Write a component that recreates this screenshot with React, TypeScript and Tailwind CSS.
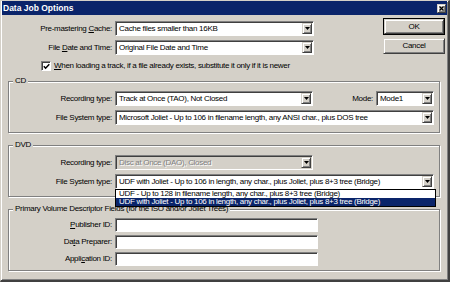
import React from "react";

const sunken =
  "border border-t-[#808080] border-l-[#808080] border-r-white border-b-white shadow-[inset_1px_1px_0_#404040]";
const raised =
  "border border-t-[#d4d0c8] border-l-[#d4d0c8] border-r-[#404040] border-b-[#404040] shadow-[inset_1px_1px_0_#fff,inset_-1px_-1px_0_#808080]";

function Arrow() {
  return (
    <div className={`w-[10px] h-full shrink-0 bg-[#d4d0c8] flex items-center justify-center ${raised}`}>
      <svg width="5" height="3" viewBox="0 0 5 3">
        <path d="M0 0 H5 L2.5 3 Z" fill="#000" />
      </svg>
    </div>
  );
}

function Combo({
  text,
  className = "",
  disabled = false,
}: {
  text: string;
  className?: string;
  disabled?: boolean;
}) {
  return (
    <div
      className={`flex h-[15px] p-[1px] ${sunken} ${disabled ? "bg-[#d4d0c8]" : "bg-white"} ${className}`}
    >
      <div
        className={`flex-1 overflow-hidden whitespace-nowrap pl-[2px] leading-[11px] ${
          disabled ? "text-[#808080] [text-shadow:1px_1px_0_#fff]" : "text-black"
        }`}
      >
        {text}
      </div>
      <Arrow />
    </div>
  );
}

function Label({ children, w = "w-[103px]" }: { children: React.ReactNode; w?: string }) {
  return <div className={`${w} shrink-0 text-right whitespace-nowrap`}>{children}</div>;
}

function Group({ title, children, className = "" }: { title: string; children: React.ReactNode; className?: string }) {
  return (
    <fieldset
      className={`ml-[6px] w-[432px] border border-[#808080] shadow-[inset_1px_1px_0_#fff,1px_1px_0_#fff] ${className}`}
    >
      <legend className="ml-[4px] px-[2px] h-[10px] leading-[10px] whitespace-nowrap bg-[#d4d0c8]">{title}</legend>
      {children}
    </fieldset>
  );
}

export default function App() {
  return (
    <div className="w-[450px] h-[282px] overflow-hidden bg-[#d4d0c8] border border-t-[#d4d0c8] border-l-[#d4d0c8] border-r-2 border-b-2 border-r-[#404040] border-b-[#404040] shadow-[inset_1px_1px_0_#fff,inset_-1px_-1px_0_#808080] px-[1px] pb-[1px] flex flex-col text-[8px] tracking-[-0.3px] text-black font-['Liberation_Sans',Arial,sans-serif]">
      {/* Title bar */}
      <div className="h-[14px] shrink-0 bg-[#0a246a] flex items-center pl-[1px] pr-[1px]">
        <span className="text-white font-bold text-[8.5px] tracking-normal leading-[14px]">Data Job Options</span>
        <div className={`ml-auto w-[9px] h-[9px] bg-[#d4d0c8] flex items-center justify-center ${raised}`}>
          <svg width="5" height="5" viewBox="0 0 5 5">
            <path d="M0.5 0.5 L4.5 4.5 M4.5 0.5 L0.5 4.5" stroke="#000" strokeWidth="1.2" />
          </svg>
        </div>
      </div>

      {/* Top section */}
      <div className="flex pt-[3px]">
        <div className="flex flex-col pt-[3px]">
          <div className="flex items-center h-[15px]">
            <Label w="w-[110px]">
              Pre-mastering <u>C</u>ache:
            </Label>
            <Combo className="ml-[3px] w-[199px]" text="Cache files smaller than 16KB" />
          </div>
          <div className="flex items-center h-[15px] mt-[4px]">
            <Label w="w-[110px]">
              File <u>D</u>ate and Time:
            </Label>
            <Combo className="ml-[3px] w-[199px]" text="Original File Date and Time" />
          </div>
          <div className="flex items-center h-[10px] mt-[6px] pl-[39px]">
            <div className={`w-[10px] h-[10px] bg-white flex items-center justify-center ${sunken}`}>
              <svg width="7" height="7" viewBox="0 0 7 7">
                <path d="M0.8 3.2 L2.6 5.2 L6.3 1.2" stroke="#000" strokeWidth="1.5" fill="none" />
              </svg>
            </div>
            <span className="ml-[3px] whitespace-nowrap">
              <u>W</u>hen loading a track, if a file already exists, substitute it only if it is newer
            </span>
          </div>
        </div>
        <div className="ml-auto mr-[2px] flex flex-col">
          <div className="w-[62px] h-[17px] border border-black">
            <div className={`w-full h-full flex items-center justify-center ${raised}`}>OK</div>
          </div>
          <div className={`mt-[3px] w-[62px] h-[16px] flex items-center justify-center ${raised}`}>Cancel</div>
        </div>
      </div>

      {/* CD */}
      <Group title="CD" className="mt-[5px]">
        <div className="pt-[5px] pb-[7px] pr-[5px]">
          <div className="flex items-center h-[15px]">
            <Label>Recording type:</Label>
            <Combo className="ml-[3px] w-[198px]" text="Track at Once (TAO), Not Closed" />
            <div className="ml-auto whitespace-nowrap">Mode:</div>
            <Combo className="ml-[3px] w-[58px]" text="Mode1" />
          </div>
          <div className="flex items-center h-[15px] mt-[4px]">
            <Label>File System type:</Label>
            <Combo
              className="ml-[3px] flex-1"
              text="Microsoft Joliet -  Up to 106 in filename length, any ANSI char., plus DOS tree"
            />
          </div>
        </div>
      </Group>

      {/* DVD */}
      <Group title="DVD" className="mt-[7px]">
        <div className="pt-[5px] pb-[7px] pr-[5px]">
          <div className="flex items-center h-[15px]">
            <Label>Recording type:</Label>
            <Combo className="ml-[3px] w-[198px]" text="Disc at Once (DAO), Closed" disabled />
          </div>
          <div className="flex items-center h-[15px] mt-[4px]">
            <Label>File System type:</Label>
            <div className="relative ml-[3px] flex-1">
              <Combo
                className="w-full"
                text="UDF with Joliet - Up to 106 in length, any char., plus Joliet, plus 8+3 tree (Bridge)"
              />
              <div className="absolute left-0 top-full z-10 w-[321px] bg-white border border-black">
                <div className="h-[8px] leading-[8px] px-[3px] whitespace-nowrap">
                  UDF - Up to 128 in filename length, any char., plus 8+3 tree (Bridge)
                </div>
                <div className="h-[8px] leading-[8px] px-[3px] whitespace-nowrap bg-[#0a246a] text-white">
                  UDF with Joliet - Up to 106 in length, any char., plus Joliet, plus 8+3 tree (Bridge)
                </div>
              </div>
            </div>
          </div>
        </div>
      </Group>

      {/* Primary Volume Descriptor */}
      <Group title="Primary Volume Descriptor Fields (for the ISO and/or Joliet Trees)" className="mt-[7px]">
        <div className="pt-[4px] pb-[4px] pr-[5px] flex flex-col gap-[3px]">
          <div className="flex items-center h-[14px]">
            <Label>
              <u>P</u>ublisher ID:
            </Label>
            <div className={`ml-[3px] w-[203px] h-[14px] bg-white ${sunken}`} />
          </div>
          <div className="flex items-center h-[14px]">
            <Label>
              Da<u>t</u>a Preparer:
            </Label>
            <div className={`ml-[3px] w-[203px] h-[14px] bg-white ${sunken}`} />
          </div>
          <div className="flex items-center h-[14px]">
            <Label>
              Appli<u>c</u>ation ID:
            </Label>
            <div className={`ml-[3px] w-[203px] h-[14px] bg-white ${sunken}`} />
          </div>
        </div>
      </Group>
    </div>
  );
}
